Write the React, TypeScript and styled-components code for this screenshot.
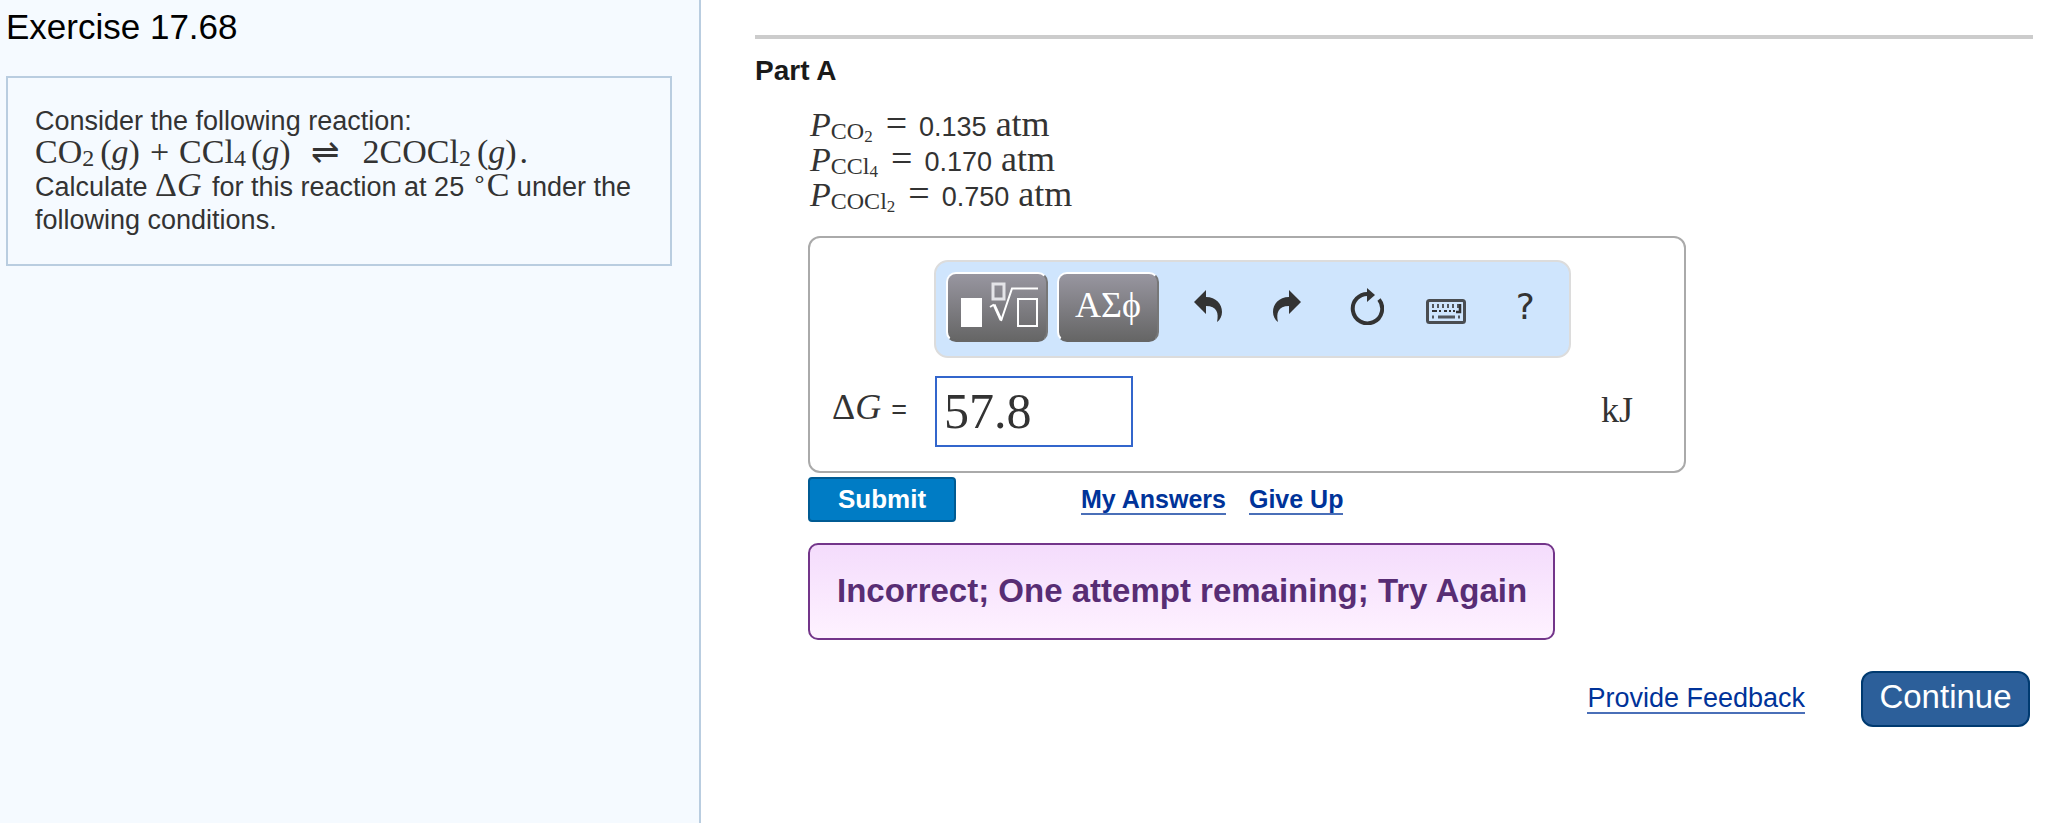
import React from 'react';
import styled, { createGlobalStyle } from 'styled-components';

const sans = '"Liberation Sans", Arial, sans-serif';
const serif = '"Liberation Serif", "Times New Roman", serif';

const GlobalStyle = createGlobalStyle`
  *, *::before, *::after { box-sizing: border-box; }
  body {
    margin: 0;
    background: #fff;
    color: #333;
    font-family: ${sans};
    font-size: 27px;
  }
  h1, h2, p { margin: 0; }
`;

const Page = styled.div`
  display: flex;
  min-height: 100vh;
`;

const Sidebar = styled.aside`
  flex: 0 0 701px;
  padding: 7px 27px 0 6px;
  background: #f5faff;
  border-right: 2px solid #b9cde0;
`;

const Title = styled.h1`
  color: #000;
  font-size: 35px;
  font-weight: 400;
  line-height: 40px;
`;

const Question = styled.section`
  margin-top: 29px;
  padding: 27px 27px;
  border: 2px solid #b9cde0;
  line-height: 33px;
`;

const Math = styled.span<{ $size?: number; $before?: number; $after?: number }>`
  font-family: ${serif};
  font-size: ${(p) => p.$size ?? 34}px;
  line-height: 0;
  margin-left: ${(p) => p.$before ?? 0}px;
  margin-right: ${(p) => p.$after ?? 0}px;

  i { font-style: italic; }
`;

const Sub = styled.sub`
  font-size: 24px;
  line-height: 0;
  vertical-align: -3px;

  & & { font-size: 17px; }
`;

const Degree = styled.sup`
  font-size: 24px;
  line-height: 0;
  vertical-align: 9px;
`;

const Main = styled.main`
  flex: 1;
  min-width: 0;
  padding: 35px 13px 0 54px;
`;

const Rule = styled.hr`
  height: 4px;
  margin: 0;
  border: 0;
  background: #ccc;
`;

const PartTitle = styled.h2`
  margin-top: 15px;
  color: #1a1a1a;
  font-size: 28px;
  line-height: 34px;
`;

const PartBody = styled.div`
  padding-left: 53px;
`;

const Conditions = styled.div`
  margin-top: 22px;
  padding-left: 2px;
  line-height: 35px;
`;

const AnswerBox = styled.form`
  display: grid;
  grid-template-columns: 102px minmax(0, 637px) auto;
  row-gap: 18px;
  align-items: center;
  max-width: 878px;
  margin-top: 21px;
  padding: 22px 22px 24px;
  border: 2px solid #aaa;
  border-radius: 12px;
`;

const Toolbar = styled.div`
  grid-column: 2;
  display: flex;
  align-items: flex-start;
  height: 98px;
  padding: 10px 4px 0 10px;
  background: #cfe5fd;
  border: 2px solid #dcdcdc;
  border-radius: 14px;
`;

const PaletteButton = styled.button`
  display: flex;
  align-items: center;
  justify-content: center;
  width: 102px;
  height: 70px;
  margin-right: 9px;
  padding: 0 0 4px;
  background: linear-gradient(#9896a0, #666);
  border: 2px solid;
  border-color: #fff #777 #666 #fff;
  border-radius: 10px;
  color: #fff;
  font-family: ${serif};
  font-size: 36px;
`;

const IconButton = styled.button`
  display: flex;
  flex: 1;
  align-items: center;
  justify-content: center;
  height: 68px;
  padding: 0;
  background: none;
  border: 0;
  color: #333;
  font-family: "DejaVu Sans", sans-serif;
  font-size: 36px;
`;

const FieldLabel = styled.label`
  grid-column: 1;
  padding-bottom: 4px;
  line-height: 40px;
  white-space: nowrap;
`;

const Field = styled.input`
  width: 198px;
  height: 71px;
  margin-left: 1px;
  padding: 0 7px 2px;
  background: #fff;
  border: 2px solid #36c;
  border-radius: 0;
  outline: 0;
  color: #333;
  font-family: ${serif};
  font-size: 50px;
`;

const Unit = styled.span`
  padding: 0 0 4px 30px;
  font-family: ${serif};
  font-size: 36px;
  line-height: 40px;
`;

const Actions = styled.div`
  display: flex;
  align-items: center;
  gap: 23px;
  margin-top: 4px;
`;

const SubmitButton = styled.button`
  width: 148px;
  height: 45px;
  margin-right: 102px;
  padding: 0;
  background: #007cc5;
  border: 2px solid #005b93;
  border-radius: 4px;
  color: #fff;
  font: bold 26px ${sans};
`;

const Link = styled.a<{ $bold?: boolean }>`
  border-bottom: 2px solid #4a6fb8;
  color: #039;
  font-size: ${(p) => (p.$bold ? 25 : 27)}px;
  font-weight: ${(p) => (p.$bold ? 700 : 400)};
  line-height: 28px;
  text-decoration: none;
`;

const Feedback = styled.p`
  width: fit-content;
  margin-top: 21px;
  padding: 26px 26px 27px 27px;
  background: linear-gradient(#f4dcfc, #fef2ff);
  border: 2px solid #73358a;
  border-radius: 10px;
  color: #582d74;
  font-size: 33px;
  font-weight: 700;
  line-height: 40px;
`;

const Footer = styled.footer`
  display: flex;
  align-items: center;
  justify-content: flex-end;
  gap: 56px;
  margin-top: 31px;
  padding-right: 3px;
`;

const ContinueButton = styled.button`
  width: 169px;
  height: 56px;
  padding: 0 0 4px;
  background: #2c5f9a;
  border: 2px solid #003a70;
  border-radius: 12px;
  color: #fff;
  font: 33px ${sans};
`;

const TemplateIcon = () => (
  <svg width="77" height="44" viewBox="-2 0 77 44" overflow="visible" fill="none" stroke="#fff" strokeWidth="2">
    <rect x="0" y="15" width="21" height="29" fill="#fff" stroke="none" />
    <rect x="32" y="1" width="11" height="15" stroke="#e4e4e8" strokeWidth="3" />
    <path d="M29 24l4-2.500" />
    <path d="M33 21.500l7 15.500" strokeWidth="3" />
    <path d="M40 38L51 5.500h26" />
    <rect x="57" y="16" width="19" height="27" />
  </svg>
);

const undoShape = 'M0 12L12 0v7c10 0 16 7 16 15 0 4-2 8-5 10 2-9 0-16-11-16v8z';

const UndoIcon = () => (
  <svg width="28" height="32" viewBox="0 0 28 32" fill="currentColor">
    <path d={undoShape} />
  </svg>
);

const RedoIcon = () => (
  <svg width="28" height="32" viewBox="0 0 28 32" fill="currentColor">
    <path transform="matrix(-1 0 0 1 28 0)" d={undoShape} />
  </svg>
);

const ResetIcon = () => (
  <svg width="34" height="37" viewBox="0 0 34 37" fill="none">
    <path d="M29 11.500A14.700 14.700 0 1 1 19 6" stroke="currentColor" strokeWidth="4" />
    <path d="M17 0l8 7-8 7z" fill="currentColor" />
  </svg>
);

const KeyboardIcon = () => (
  <svg width="40" height="35" viewBox="0 -10 40 35" fill="none" stroke="currentColor">
    <rect x="1.500" y="1.500" width="37" height="22" rx="2" strokeWidth="3" strokeOpacity=".85" />
    <path d="M6 7h27" strokeWidth="4" strokeDasharray="2 3" strokeOpacity=".8" />
    <path d="M6 12h5M13 12h2M18 12h3M23 12h2M27 12h2" strokeWidth="2" />
    <path d="M34 5v8h-4" strokeWidth="2.500" />
    <path d="M6 18h2M12 18h17M32 18h2" strokeWidth="3" strokeOpacity=".8" />
  </svg>
);

const conditions: { species: string; count: number; value: string }[] = [
  { species: 'CO', count: 2, value: '0.135' },
  { species: 'CCl', count: 4, value: '0.170' },
  { species: 'COCl', count: 2, value: '0.750' },
];

export default function App() {
  return (
    <>
      <GlobalStyle />
      <Page>
        <Sidebar>
          <Title>Exercise 17.68</Title>
          <Question>
            Consider the following reaction:
            <br />
            <Math>CO<Sub>2</Sub></Math>
            <Math $before={6}>(<i>g</i>)</Math>
            <Math $before={10} $after={10}>+</Math>
            <Math>CCl<Sub>4</Sub></Math>
            <Math $before={5}>(<i>g</i>)</Math>
            <Math $before={20} $after={24}>⇌</Math>
            <Math>2COCl<Sub>2</Sub></Math>
            <Math $before={6}>(<i>g</i>)</Math>
            <Math $before={3}>.</Math>
            <br />
            Calculate <Math $after={3}>Δ<i>G</i></Math> for this reaction at 25{' '}
            <Math><Degree>∘</Degree>C</Math> under the following conditions.
          </Question>
        </Sidebar>
        <Main>
          <Rule />
          <PartTitle>Part A</PartTitle>
          <PartBody>
            <Conditions>
              {conditions.map(({ species, count, value }) => (
                <div key={species}>
                  <Math $after={13}>
                    <i>P</i>
                    <Sub>{species}<Sub>{count}</Sub></Sub>
                  </Math>
                  <Math $size={38} $after={12}>=</Math>
                  {value}
                  <Math $size={36} $before={9}>atm</Math>
                </div>
              ))}
            </Conditions>
            <AnswerBox id="answer" onSubmit={(e) => e.preventDefault()}>
              <Toolbar role="toolbar" aria-label="Equation tools">
                <PaletteButton type="button" aria-label="Templates"><TemplateIcon /></PaletteButton>
                <PaletteButton type="button" aria-label="Symbols">ΑΣϕ</PaletteButton>
                <IconButton type="button" aria-label="Undo"><UndoIcon /></IconButton>
                <IconButton type="button" aria-label="Redo"><RedoIcon /></IconButton>
                <IconButton type="button" aria-label="Reset"><ResetIcon /></IconButton>
                <IconButton type="button" aria-label="Keyboard shortcuts"><KeyboardIcon /></IconButton>
                <IconButton type="button" aria-label="Help">?</IconButton>
              </Toolbar>
              <FieldLabel htmlFor="delta-g">
                <Math $size={36} $after={10}>Δ<i>G</i></Math>=
              </FieldLabel>
              <Field id="delta-g" type="text" defaultValue="57.8" />
              <Unit>kJ</Unit>
            </AnswerBox>
            <Actions>
              <SubmitButton type="submit" form="answer">Submit</SubmitButton>
              <Link href="#answers" $bold>My Answers</Link>
              <Link href="#give-up" $bold>Give Up</Link>
            </Actions>
            <Feedback role="status">Incorrect; One attempt remaining; Try Again</Feedback>
          </PartBody>
          <Footer>
            <Link href="#feedback">Provide Feedback</Link>
            <ContinueButton type="button">Continue</ContinueButton>
          </Footer>
        </Main>
      </Page>
    </>
  );
}
